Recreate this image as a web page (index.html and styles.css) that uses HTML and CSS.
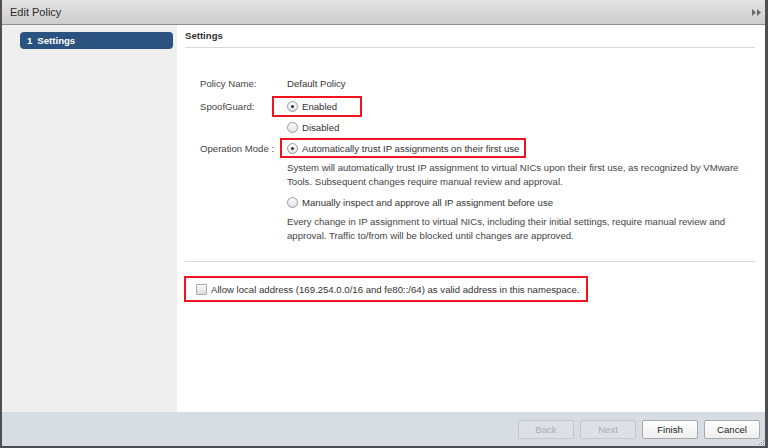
FILE: index.html
```html
<!DOCTYPE html>
<html>
<head>
<meta charset="utf-8">
<link rel="stylesheet" href="styles.css">
</head>
<body>
<div class="dialog">
  <div class="titlebar">
    <span class="title">Edit Policy</span>
    <svg class="expand" width="9" height="7" viewBox="0 0 9 7"><path d="M0 0 L4 3.5 L0 7 Z M5 0 L9 3.5 L5 7 Z" fill="#6a6a6a"/></svg>
  </div>
  <div class="body">
    <div class="nav">
      <div class="step"><span class="num">1</span>Settings</div>
    </div>
    <div class="content">
      <div class="header">Settings</div>
      <div class="form">
        <div class="row r1">
          <span class="lbl">Policy Name:</span>
          <span class="val">Default Policy</span>
        </div>
        <div class="row r2">
          <span class="lbl">SpoofGuard:</span>
          <span class="hl hl-enabled"><span class="radio on"></span>Enabled</span>
        </div>
        <div class="row r3">
          <span class="lbl"></span>
          <span class="opt"><span class="radio"></span>Disabled</span>
        </div>
        <div class="row r4">
          <span class="lbl">Operation Mode :</span>
          <span class="hl hl-mode"><span class="radio on"></span>Automatically trust IP assignments on their first use</span>
        </div>
        <p class="desc">System will automatically trust IP assignment to virtual NICs upon their first use, as recognized by VMware Tools. Subsequent changes require manual review and approval.</p>
        <div class="row r5">
          <span class="lbl"></span>
          <span class="opt"><span class="radio"></span>Manually inspect and approve all IP assignment before use</span>
        </div>
        <p class="desc">Every change in IP assignment to virtual NICs, including their initial settings, require manual review and approval. Traffic to/from will be blocked until changes are approved.</p>
      </div>
      <div class="sep"></div>
      <div class="hl hl-check"><span class="checkbox"></span>Allow local address (169.254.0.0/16 and fe80::/64) as valid address in this namespace.</div>
    </div>
  </div>
  <div class="footer">
    <button class="btn disabled">Back</button>
    <button class="btn disabled">Next</button>
    <button class="btn">Finish</button>
    <button class="btn">Cancel</button>
    <svg class="grip" width="7" height="7" viewBox="0 0 7 7"><g fill="#8a8f96"><rect x="5" y="1" width="1" height="1"/><rect x="3" y="3" width="1" height="1"/><rect x="5" y="3" width="1" height="1"/><rect x="1" y="5" width="1" height="1"/><rect x="3" y="5" width="1" height="1"/><rect x="5" y="5" width="1" height="1"/></g></svg>
  </div>
</div>
</body>
</html>
```

FILE: styles.css
```css
html, body {
  margin: 0;
  padding: 0;
}
body {
  width: 768px;
  height: 448px;
  background: #4d4f52;
  font-family: "Liberation Sans", Arial, sans-serif;
  font-size: 9.6px;
  color: #333;
  overflow: hidden;
}
.dialog {
  margin-left: 2px;
  width: 763px;
  height: 446px;
  display: flex;
  flex-direction: column;
  background: #fff;
}
.titlebar {
  height: 24px;
  flex: none;
  display: flex;
  align-items: center;
  justify-content: space-between;
  padding: 0 4px 0 8px;
  background: linear-gradient(#e4e4e4, #cdcdcd);
  border-bottom: 1px solid #8e8e8e;
}
.title {
  font-size: 11px;
  color: #2a2a2a;
}
.body {
  flex: 1;
  display: flex;
  min-height: 0;
}
.nav {
  width: 175px;
  flex: none;
  background: #efefef;
  padding-top: 7px;
}
.step {
  margin-left: 18px;
  width: 153px;
  height: 17px;
  box-sizing: border-box;
  background: #2c5380;
  border-radius: 4px;
  color: #fff;
  font-weight: bold;
  line-height: 17px;
  padding-left: 7px;
}
.num {
  margin-right: 5px;
}
.content {
  flex: 1;
  padding: 0 10px 0 8px;
}
.header {
  height: 22px;
  line-height: 22px;
  font-weight: bold;
  color: #333;
  border-bottom: 1px solid #d8d8d8;
}
.form {
  margin-left: 15px;
  padding-top: 25px;
}
.row {
  display: flex;
  align-items: center;
}
.lbl {
  width: 87px;
  flex: none;
  color: #444;
}
.r1 { height: 20px; }
.r2 { margin-top: 3px; height: 21px; }
.r3 { height: 20px; }
.r4 { margin-top: 1px; height: 20px; }
.r5 { margin-top: 3px; height: 20px; }
.val, .opt {
  display: flex;
  align-items: center;
}
.hl {
  display: flex;
  align-items: center;
  box-sizing: border-box;
  border: 2px solid #f0141e;
}
.hl-enabled {
  margin-left: -15px;
  padding-left: 13px;
  width: 90px;
  height: 21px;
}
.hl-mode {
  margin-left: -7px;
  padding-left: 5px;
  width: 246px;
  height: 20px;
}
.radio {
  width: 11px;
  height: 11px;
  box-sizing: border-box;
  border: 1px solid #9a9a9a;
  border-radius: 50%;
  background: linear-gradient(#fdfdfd, #e2e2e2);
  margin-right: 4px;
  display: flex;
  align-items: center;
  justify-content: center;
}
.radio.on::after {
  content: "";
  width: 3px;
  height: 3px;
  border-radius: 50%;
  background: #333;
}
.desc {
  margin: 3px 0 0 87px;
  line-height: 14px;
  color: #444;
}
.sep {
  margin-top: 18px;
  height: 1px;
  background: #dcdcdc;
}
.hl-check {
  margin: 14px 0 0 -1px;
  width: 404px;
  height: 26px;
  padding-left: 10px;
}
.checkbox {
  width: 11px;
  height: 11px;
  box-sizing: border-box;
  border: 1px solid #a9a9a9;
  border-radius: 1px;
  background: linear-gradient(#fafafa, #dedede);
  margin-right: 4px;
}
.footer {
  height: 34px;
  flex: none;
  display: flex;
  align-items: center;
  justify-content: flex-end;
  gap: 6px;
  padding-right: 5px;
  background: #d8dde3;
  position: relative;
}
.btn {
  width: 56px;
  height: 19px;
  margin: 0;
  padding: 0;
  font-family: "Liberation Sans", Arial, sans-serif;
  font-size: 9.6px;
  color: #222;
  background: linear-gradient(#ffffff, #eeeeee);
  border: 1px solid #a6a9ad;
  border-radius: 2px;
}
.btn.disabled {
  color: #a9adb2;
  background: #dde1e6;
  border-color: #c4c8cd;
}
.grip {
  position: absolute;
  right: 0;
  bottom: 0;
}
```
